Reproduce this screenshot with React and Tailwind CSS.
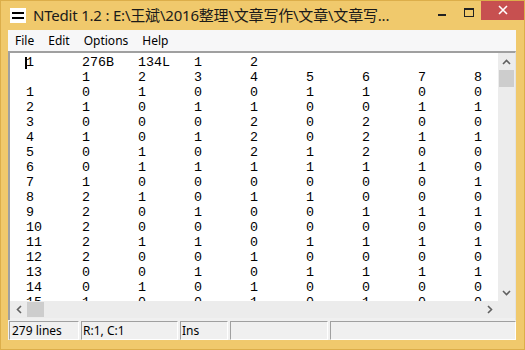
import React from "react";

const header1 = ["1", "276B", "134L", "1", "2"];
const header2 = ["", "1", "2", "3", "4", "5", "6", "7", "8"];
const rows = [
  "0 1 0 0 1 1 0 0",
  "1 0 1 1 0 0 1 1",
  "0 0 0 2 0 2 0 0",
  "1 0 1 2 0 2 1 1",
  "0 1 0 2 1 2 0 0",
  "0 1 1 1 1 1 1 0",
  "1 0 0 0 0 0 0 1",
  "2 1 0 1 1 0 0 0",
  "2 0 1 0 0 1 1 1",
  "2 0 0 0 0 0 0 0",
  "2 1 1 0 1 1 1 1",
  "2 0 0 1 0 0 0 0",
  "0 0 1 0 1 1 1 1",
  "0 1 0 1 0 0 0 0",
  "1 0 0 1 0 1 0 0",
];

function Line({ cells }) {
  return (
    <div className="flex h-[15px] leading-[15px] whitespace-pre">
      {cells.map((c, i) => (
        <div key={i} className="w-[56px] shrink-0">
          {c}
        </div>
      ))}
    </div>
  );
}

export default function App() {
  const ui = { fontFamily: '"Noto Sans", "Noto Sans CJK SC", sans-serif' };
  return (
    <div
      className="w-[525px] h-[350px] bg-[#f0c96c] flex flex-col overflow-hidden border border-[#dcae4a]"
      style={ui}
    >
      {/* title bar */}
      <div className="h-[29px] flex items-start shrink-0">
        <div className="mt-[7px] ml-[9px] w-[16px] h-[15px] bg-white flex flex-col justify-center gap-[3px] px-[2px]">
          <div className="h-[2px] bg-black" />
          <div className="h-[2px] bg-black" />
        </div>
        <div className="ml-[7px] mt-[4px] text-[15px] leading-[20px] text-[#1a1a1a] whitespace-nowrap tracking-[-0.2px]">
          NTedit 1.2 : E:\王斌\2016整理\文章写作\文章\文章写...
        </div>
        <div className="flex-1" />
        <div className="w-[8px] h-[2px] bg-[#222] mt-[13px] mr-[18px]" />
        <div className="w-[10px] h-[9px] border border-[#222] border-t-2 mt-[7px] mr-[7px]" />
        <div className="w-[44px] h-[20px] bg-[#c75050] -mt-[1px] mr-[-1px] flex items-center justify-center">
          <svg width="10" height="10" viewBox="0 0 10 10">
            <path d="M1 1 L9 9 M9 1 L1 9" stroke="white" strokeWidth="1.6" />
          </svg>
        </div>
      </div>

      {/* client */}
      <div className="ml-[7px] w-[508px] h-[310px] flex flex-col bg-[#f0f0f0] shrink-0">
        {/* menu bar */}
        <div className="h-[21px] bg-[#f7f7f8] flex items-center text-[12px] text-black shrink-0">
          <span className="ml-[7px]">File</span>
          <span className="ml-[14px]">Edit</span>
          <span className="ml-[14px]">Options</span>
          <span className="ml-[14px]">Help</span>
        </div>

        {/* text area */}
        <div className="w-[508px] h-[269px] border-t-2 border-l-2 border-t-[#a0a0a0] border-l-[#a0a0a0] border-r border-r-[#e3e3e3] grid grid-cols-[488px_17px] grid-rows-[248px_17px] shrink-0">
          <div
            className="bg-white overflow-hidden relative pl-[16px] pt-[2px] text-[13.333px] text-black"
            style={{ fontFamily: '"Liberation Mono", monospace' }}
          >
            <div className="absolute left-[15px] top-[4px] w-[2px] h-[12px] bg-black" />
            <Line cells={header1} />
            <Line cells={header2} />
            {rows.map((r, i) => (
              <Line key={i} cells={[String(i + 1), ...r.split(" ")]} />
            ))}
          </div>

          <div className="bg-[#ececec] flex flex-col">
            <div className="h-[17px] flex items-center justify-center">
              <svg width="9" height="6" viewBox="0 0 9 6">
                <path d="M1 5 L4.5 1.5 L8 5" stroke="#606060" strokeWidth="1.6" fill="none" />
              </svg>
            </div>
            <div className="h-[17px] mx-[1px] bg-[#cdcdcd]" />
            <div className="flex-1" />
            <div className="h-[17px] flex items-center justify-center">
              <svg width="9" height="6" viewBox="0 0 9 6">
                <path d="M1 1 L4.5 4.5 L8 1" stroke="#606060" strokeWidth="1.6" fill="none" />
              </svg>
            </div>
          </div>

          <div className="flex bg-[#ececec]">
            <div className="w-[17px] flex items-center justify-center">
              <svg width="6" height="9" viewBox="0 0 6 9">
                <path d="M5 1 L1.5 4.5 L5 8" stroke="#606060" strokeWidth="1.6" fill="none" />
              </svg>
            </div>
            <div className="w-[17px] my-[1px] bg-[#cdcdcd]" />
            <div className="flex-1" />
            <div className="w-[17px] flex items-center justify-center">
              <svg width="6" height="9" viewBox="0 0 6 9">
                <path d="M1 1 L4.5 4.5 L1 8" stroke="#606060" strokeWidth="1.6" fill="none" />
              </svg>
            </div>
          </div>
          <div className="bg-[#ececec]" />
        </div>

        {/* status bar */}
        <div className="h-[20px] flex items-stretch gap-[2px] pt-[1px] pl-[1px] text-[12px] text-black shrink-0">
          <div className="w-[70px] border border-t-[#a0a0a0] border-l-[#a0a0a0] border-r-white border-b-white pl-[2px] leading-[17px]">279 lines</div>
          <div className="w-[97px] border border-t-[#a0a0a0] border-l-[#a0a0a0] border-r-white border-b-white pl-[1px] leading-[17px]">R:1, C:1</div>
          <div className="w-[48px] border border-t-[#a0a0a0] border-l-[#a0a0a0] border-r-white border-b-white pl-[1px] leading-[17px]">Ins</div>
          <div className="w-[98px] border border-t-[#a0a0a0] border-l-[#a0a0a0] border-r-white border-b-white" />
          <div className="flex-1 border border-t-[#a0a0a0] border-l-[#a0a0a0] border-r-white border-b-white" />
        </div>
      </div>
    </div>
  );
}
